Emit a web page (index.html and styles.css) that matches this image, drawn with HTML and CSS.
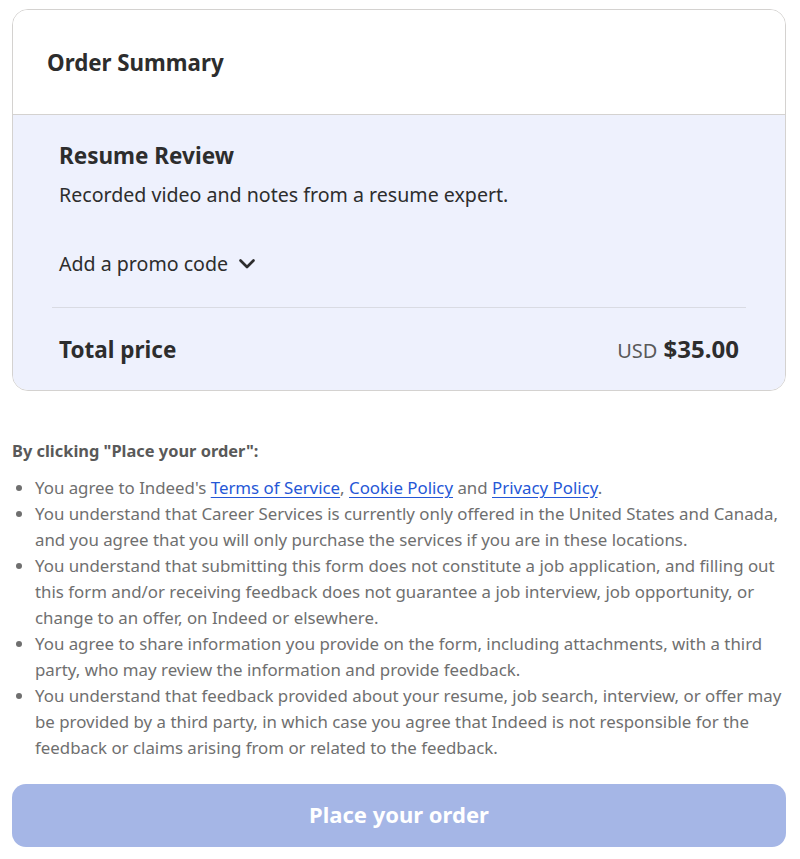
FILE: index.html
```html
<!DOCTYPE html>
<html lang="en">
<head>
<meta charset="utf-8">
<title>Order Summary</title>
<link rel="stylesheet" href="styles.css">
</head>
<body>
<main class="page">
  <section class="card">
    <header class="card-head">
      <h2 class="card-title">Order Summary</h2>
    </header>
    <div class="card-body">
      <h3 class="product">Resume Review</h3>
      <p class="product-desc">Recorded video and notes from a resume expert.</p>
      <button class="promo" type="button">Add a promo code
        <svg class="chev" width="18" height="18" viewBox="0 0 18 18" aria-hidden="true"><path d="M2.5 5.5 L9 12 L15.5 5.5" fill="none" stroke="#2d2d2d" stroke-width="2.7" stroke-linecap="round" stroke-linejoin="round"/></svg>
      </button>
      <div class="total">
        <span class="total-label">Total price</span>
        <span class="total-price"><span class="cur">USD</span> <strong>$35.00</strong></span>
      </div>
    </div>
  </section>

  <section class="terms">
    <p class="terms-title">By clicking "Place your order":</p>
    <ul class="terms-list">
      <li>You agree to Indeed's <a href="#">Terms of Service</a>, <a href="#">Cookie Policy</a> and <a href="#">Privacy Policy</a>.</li>
      <li>You understand that Career Services is currently only offered in the United States and Canada, and you agree that you will only purchase the services if you are in these locations.</li>
      <li>You understand that submitting this form does not constitute a job application, and filling out this form and/or receiving feedback does not guarantee a job interview, job opportunity, or change to an offer, on Indeed or elsewhere.</li>
      <li>You agree to share information you provide on the form, including attachments, with a third party, who may review the information and provide feedback.</li>
      <li>You understand that feedback provided about your resume, job search, interview, or offer may be provided by a third party, in which case you agree that Indeed is not responsible for the feedback or claims arising from or related to the feedback.</li>
    </ul>
  </section>

  <button class="order-btn" type="button">Place your order</button>
</main>
</body>
</html>
```

FILE: styles.css
```css
* { box-sizing: border-box; }
html, body { margin: 0; padding: 0; background: #ffffff; }
body {
  font-family: "Noto Sans", "Open Sans", sans-serif;
  color: #2d2d2d;
}
.page {
  padding: 9px 14px 0 12px;
  display: flex;
  flex-direction: column;
}
.card {
  border: 1px solid #d4d2d0;
  border-radius: 16px;
  overflow: hidden;
}
.card-head {
  background: #ffffff;
  height: 105px;
  padding: 0 34px;
  display: flex;
  align-items: center;
  border-bottom: 1px solid #d4d2d0;
}
.card-title {
  margin: 0;
  font-size: 22.3px;
  font-weight: 700;
}
.card-body {
  background: #eef1fd;
  padding: 26px 39px 23px 39px;
}
.product {
  margin: 0 0 0 7px;
  font-size: 22.5px;
  font-weight: 700;
  line-height: 30px;
}
.product-desc {
  margin: 10px 0 0 7px;
  font-size: 19.6px;
  line-height: 28px;
}
.promo {
  margin: 41px 0 0 7px;
  padding: 0;
  border: 0;
  background: none;
  font: inherit;
  font-size: 19.6px;
  color: #2d2d2d;
  display: flex;
  align-items: center;
  gap: 10px;
  line-height: 28px;
}
.chev { display: block; }
.total {
  margin-top: 29px;
  border-top: 1px solid #d9dbe3;
  padding: 25px 7px 0 7px;
  display: flex;
  justify-content: space-between;
  align-items: center;
  line-height: 32px;
}
.total-label {
  font-size: 22.5px;
  font-weight: 700;
}
.total-price { font-size: 24px; }
.cur { font-size: 20px; color: #595959; }
.total-price strong { font-weight: 700; }

.terms {
  margin-top: 48px;
  color: #6f6f6f;
}
.terms-title {
  margin: 0;
  font-size: 16.4px;
  font-weight: 700;
  color: #595959;
  line-height: 24px;
}
.terms-list {
  margin: 12px 0 0 0;
  padding-left: 23px;
  font-size: 16.85px;
  line-height: 26px;
}
.terms-list a {
  color: #2557d6;
  text-decoration: underline;
  text-underline-offset: 3px;
}
.order-btn {
  margin-top: 23px;
  height: 63px;
  border: 0;
  border-radius: 14px;
  background: #a5b6e6;
  color: #ffffff;
  font-family: inherit;
  font-size: 22px;
  font-weight: 700;
  line-height: 1;
  padding: 0 0 3px 0;
}
```
